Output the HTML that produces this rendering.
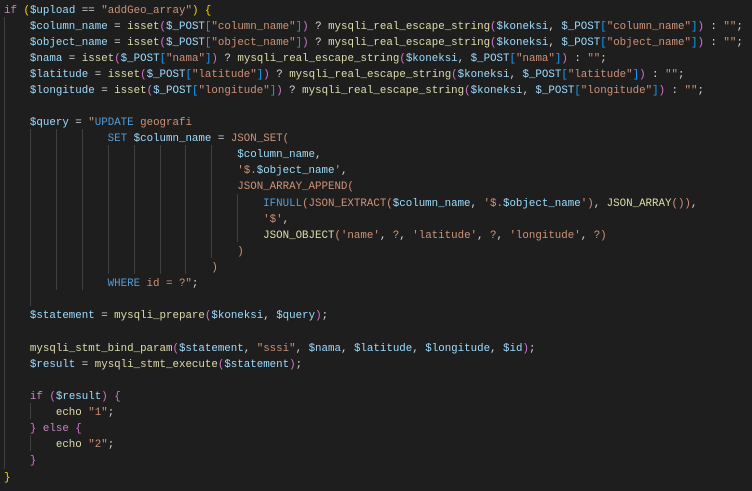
<!DOCTYPE html>
<html><head><meta charset="utf-8"><style>
html,body{margin:0;padding:0;background:#1e1e1e;width:752px;height:491px;overflow:hidden}
#c{position:relative;top:2px;width:752px;height:489px;font-family:"Liberation Mono",monospace;font-size:10.8px;color:#d4d4d4}
.l{position:absolute;left:4px;white-space:pre;height:16px;line-height:16px}
.g{position:absolute;width:1px;background:#404040}
.k{color:#c586c0}.v{color:#9cdcfe}.f{color:#dcdcaa}.s{color:#ce9178}.o{color:#d4d4d4}
.b1{color:#ffd700}.b2{color:#da70d6}.b3{color:#179fff}.q{color:#569cd6}
</style></head><body><div id="c">
<div class="g" style="left:4px;top:15px;height:452px"></div>
<div class="g" style="left:30px;top:127px;height:177px"></div>
<div class="g" style="left:56px;top:127px;height:161px"></div>
<div class="g" style="left:82px;top:127px;height:161px"></div>
<div class="g" style="left:108px;top:143px;height:129px"></div>
<div class="g" style="left:134px;top:143px;height:129px"></div>
<div class="g" style="left:160px;top:143px;height:129px"></div>
<div class="g" style="left:185px;top:143px;height:129px"></div>
<div class="g" style="left:211px;top:143px;height:113px"></div>
<div class="g" style="left:237px;top:192px;height:48px"></div>
<div class="g" style="left:30px;top:401px;height:16px"></div>
<div class="g" style="left:30px;top:433px;height:16px"></div>

<div class="l" style="top:1px"><span class="k">if</span> <span class="b1">(</span><span class="v">$upload</span> == <span class="s">"addGeo_array"</span><span class="b1">)</span> <span class="b1">{</span></div>
<div class="l" style="top:17px">    <span class="v">$column_name</span> = <span class="f">isset</span><span class="b2">(</span><span class="v">$_POST</span><span class="b3">[</span><span class="s">"column_name"</span><span class="b3">]</span><span class="b2">)</span> ? <span class="f">mysqli_real_escape_string</span><span class="b2">(</span><span class="v">$koneksi</span>, <span class="v">$_POST</span><span class="b3">[</span><span class="s">"column_name"</span><span class="b3">]</span><span class="b2">)</span> : <span class="s">""</span>;</div>
<div class="l" style="top:33px">    <span class="v">$object_name</span> = <span class="f">isset</span><span class="b2">(</span><span class="v">$_POST</span><span class="b3">[</span><span class="s">"object_name"</span><span class="b3">]</span><span class="b2">)</span> ? <span class="f">mysqli_real_escape_string</span><span class="b2">(</span><span class="v">$koneksi</span>, <span class="v">$_POST</span><span class="b3">[</span><span class="s">"object_name"</span><span class="b3">]</span><span class="b2">)</span> : <span class="s">""</span>;</div>
<div class="l" style="top:49px">    <span class="v">$nama</span> = <span class="f">isset</span><span class="b2">(</span><span class="v">$_POST</span><span class="b3">[</span><span class="s">"nama"</span><span class="b3">]</span><span class="b2">)</span> ? <span class="f">mysqli_real_escape_string</span><span class="b2">(</span><span class="v">$koneksi</span>, <span class="v">$_POST</span><span class="b3">[</span><span class="s">"nama"</span><span class="b3">]</span><span class="b2">)</span> : <span class="s">""</span>;</div>
<div class="l" style="top:65px">    <span class="v">$latitude</span> = <span class="f">isset</span><span class="b2">(</span><span class="v">$_POST</span><span class="b3">[</span><span class="s">"latitude"</span><span class="b3">]</span><span class="b2">)</span> ? <span class="f">mysqli_real_escape_string</span><span class="b2">(</span><span class="v">$koneksi</span>, <span class="v">$_POST</span><span class="b3">[</span><span class="s">"latitude"</span><span class="b3">]</span><span class="b2">)</span> : <span class="s">""</span>;</div>
<div class="l" style="top:81px">    <span class="v">$longitude</span> = <span class="f">isset</span><span class="b2">(</span><span class="v">$_POST</span><span class="b3">[</span><span class="s">"longitude"</span><span class="b3">]</span><span class="b2">)</span> ? <span class="f">mysqli_real_escape_string</span><span class="b2">(</span><span class="v">$koneksi</span>, <span class="v">$_POST</span><span class="b3">[</span><span class="s">"longitude"</span><span class="b3">]</span><span class="b2">)</span> : <span class="s">""</span>;</div>
<div class="l" style="top:113px">    <span class="v">$query</span> = <span class="s">"</span><span class="q">UPDATE</span><span class="s"> geografi</span></div>
<div class="l" style="top:129px">                <span class="q">SET</span> <span class="v">$column_name</span> = <span class="s">JSON_SET(</span></div>
<div class="l" style="top:145px">                                    <span class="v">$column_name</span>,</div>
<div class="l" style="top:161px">                                    <span class="s">'$.</span><span class="v">$object_name</span><span class="s">'</span>,</div>
<div class="l" style="top:177px">                                    <span class="s">JSON_ARRAY_APPEND(</span></div>
<div class="l" style="top:194px">                                        <span class="q">IFNULL</span><span class="s">(JSON_EXTRACT(</span><span class="v">$column_name</span>, <span class="s">'$.</span><span class="v">$object_name</span><span class="s">')</span>, <span class="f">JSON_ARRAY</span><span class="s">())</span>,</div>
<div class="l" style="top:210px">                                        <span class="s">'$'</span>,</div>
<div class="l" style="top:226px">                                        <span class="f">JSON_OBJECT</span><span class="s">('name'</span>, <span class="s">?</span>, <span class="s">'latitude'</span>, <span class="s">?</span>, <span class="s">'longitude'</span>, <span class="s">?)</span></div>
<div class="l" style="top:242px">                                    <span class="s">)</span></div>
<div class="l" style="top:258px">                                <span class="s">)</span></div>
<div class="l" style="top:274px">                <span class="q">WHERE</span><span class="s"> id = ?"</span>;</div>
<div class="l" style="top:306px">    <span class="v">$statement</span> = <span class="f">mysqli_prepare</span><span class="b2">(</span><span class="v">$koneksi</span>, <span class="v">$query</span><span class="b2">)</span>;</div>
<div class="l" style="top:339px">    <span class="f">mysqli_stmt_bind_param</span><span class="b2">(</span><span class="v">$statement</span>, <span class="s">"sssi"</span>, <span class="v">$nama</span>, <span class="v">$latitude</span>, <span class="v">$longitude</span>, <span class="v">$id</span><span class="b2">)</span>;</div>
<div class="l" style="top:355px">    <span class="v">$result</span> = <span class="f">mysqli_stmt_execute</span><span class="b2">(</span><span class="v">$statement</span><span class="b2">)</span>;</div>
<div class="l" style="top:387px">    <span class="k">if</span> <span class="b2">(</span><span class="v">$result</span><span class="b2">)</span> <span class="b2">{</span></div>
<div class="l" style="top:403px">        <span class="f">echo</span> <span class="s">"1"</span>;</div>
<div class="l" style="top:419px">    <span class="b2">}</span> <span class="k">else</span> <span class="b2">{</span></div>
<div class="l" style="top:435px">        <span class="f">echo</span> <span class="s">"2"</span>;</div>
<div class="l" style="top:451px">    <span class="b2">}</span></div>
<div class="l" style="top:468px"><span class="b1">}</span></div>
</div></body></html>
